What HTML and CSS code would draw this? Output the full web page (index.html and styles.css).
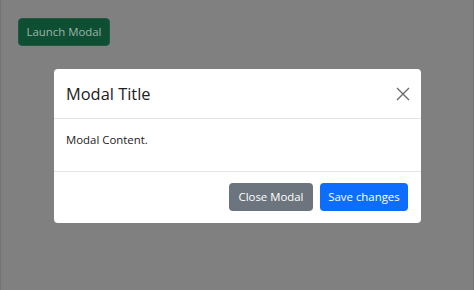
FILE: index.html
```html
<!DOCTYPE html>
<html>
<head>
<meta charset="utf-8">
<link rel="stylesheet" href="styles.css">
</head>
<body>
<div class="page">
  <button class="btn btn-launch">Launch Modal</button>
</div>
<div class="modal">
  <div class="modal-header">
    <h5 class="modal-title">Modal Title</h5>
    <svg class="close" width="14" height="14" viewBox="0 0 14 14"><path d="M1 1L13 13M13 1L1 13" stroke="#666" stroke-width="1.3" fill="none"/></svg>
  </div>
  <div class="modal-body">Modal Content.</div>
  <div class="modal-footer">
    <button class="btn btn-secondary">Close Modal</button>
    <button class="btn btn-primary">Save changes</button>
  </div>
</div>
</body>
</html>
```
FILE: styles.css
```css
html, body { margin: 0; padding: 0; }
body {
  width: 472px;
  height: 290px;
  background: #808080;
  border-left: 1px solid #737373;
  border-right: 1px solid #737373;
  font-family: "Open Sans", "Noto Sans", sans-serif;
  position: relative;
  overflow: hidden;
}
.page { padding: 18px 17px; }
.btn {
  font-family: inherit;
  font-size: 11.4px;
  line-height: 18px;
  height: 28px;
  border: 1px solid transparent;
  border-radius: 4px;
  padding: 0;
  cursor: pointer;
}
.btn-launch {
  background: #0e4f34;
  border-color: #1d5a40;
  color: #9fb3a8;
  width: 92px;
}
.modal {
  position: absolute;
  left: 53px;
  top: 69px;
  width: 367px;
  background: #fff;
  border-radius: 4px;
  color: #1d2024;
}
.modal-header {
  display: flex;
  align-items: center;
  justify-content: space-between;
  height: 49px;
  padding: 0 11px 0 12px;
  border-bottom: 1px solid #e3e5e8;
}
.modal-title {
  margin: 0;
  font-size: 16.4px;
  font-weight: 500;
  line-height: 1.2;
}
.modal-body {
  height: 28px;
  padding: 12px;
  font-size: 11.4px;
  line-height: 18px;
}
.modal-footer {
  display: flex;
  justify-content: flex-end;
  gap: 7px;
  padding: 11px 13px 12px 12px;
  border-top: 1px solid #e3e5e8;
}
.btn-secondary { background: #6c757d; color: #fff; width: 84px; }
.btn-primary { background: #0d6efd; color: #fff; width: 88px; }
```
